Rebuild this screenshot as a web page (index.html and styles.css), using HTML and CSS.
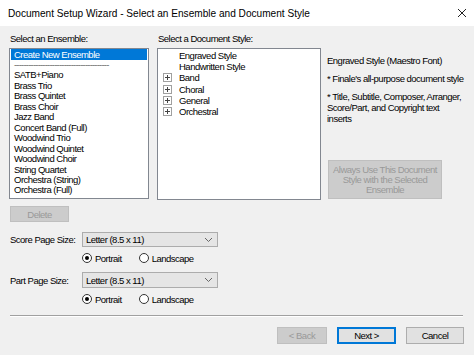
FILE: index.html
```html
<!DOCTYPE html>
<html lang="en">
<head>
  <meta charset="UTF-8" />
  <title>Document Setup Wizard</title>
  <link rel="stylesheet" href="styles.css">
</head>
<body>
<div class="window">
  <div class="titlebar">
    <span class="title">Document Setup Wizard - Select an Ensemble and Document Style</span>
    <svg class="close" width="10" height="10" viewBox="0 0 10 10"><path d="M1 1 L9 9 M9 1 L1 9" stroke="#222" stroke-width="1" fill="none"/></svg>
  </div>

  <div class="main">
    <div class="top">
      <div class="col ens">
        <div class="label">Select an Ensemble:</div>
        <ul class="list ens-list">
          <li class="sel">Create New Ensemble</li>
          <li class="dash">----------------------------------------</li>
          <li>SATB+Piano</li>
          <li>Brass Trio</li>
          <li>Brass Quintet</li>
          <li>Brass Choir</li>
          <li>Jazz Band</li>
          <li>Concert Band (Full)</li>
          <li>Woodwind Trio</li>
          <li>Woodwind Quintet</li>
          <li>Woodwind Choir</li>
          <li>String Quartet</li>
          <li>Orchestra (String)</li>
          <li>Orchestra (Full)</li>
        </ul>
        <button class="btn off delete">Delete</button>
      </div>

      <div class="col sty">
        <div class="label">Select a Document Style:</div>
        <ul class="list sty-list">
          <li><span class="nobox"></span>Engraved Style</li>
          <li><span class="nobox"></span>Handwritten Style</li>
          <li><svg class="plus" width="9" height="9" viewBox="0 0 9 9"><rect x="0.5" y="0.5" width="8" height="8" fill="#fff" stroke="#a0a0a0"/><path d="M2 4.5 H7 M4.5 2 V7" stroke="#444"/></svg>Band</li>
          <li><svg class="plus" width="9" height="9" viewBox="0 0 9 9"><rect x="0.5" y="0.5" width="8" height="8" fill="#fff" stroke="#a0a0a0"/><path d="M2 4.5 H7 M4.5 2 V7" stroke="#444"/></svg>Choral</li>
          <li><svg class="plus" width="9" height="9" viewBox="0 0 9 9"><rect x="0.5" y="0.5" width="8" height="8" fill="#fff" stroke="#a0a0a0"/><path d="M2 4.5 H7 M4.5 2 V7" stroke="#444"/></svg>General</li>
          <li><svg class="plus" width="9" height="9" viewBox="0 0 9 9"><rect x="0.5" y="0.5" width="8" height="8" fill="#fff" stroke="#a0a0a0"/><path d="M2 4.5 H7 M4.5 2 V7" stroke="#444"/></svg>Orchestral</li>
        </ul>
      </div>

      <div class="col desc">
        <p>Engraved Style (Maestro Font)</p>
        <p>* Finale's all-purpose document style</p>
        <p>* Title, Subtitle, Composer, Arranger,<br>Score/Part, and Copyright text<br>inserts</p>
        <button class="btn off always">Always Use This Document<br>Style with the Selected<br>Ensemble</button>
      </div>
    </div>

    <div class="size">
      <span class="size-label">Score Page Size:</span>
      <div class="combo">Letter (8.5 x 11)<svg class="chev" width="9" height="6" viewBox="0 0 9 6"><path d="M1 1 L4.5 4.5 L8 1" stroke="#666" fill="none"/></svg></div>
    </div>
    <div class="radios">
      <span class="radio on"></span><span class="rtext">Portrait</span>
      <span class="radio"></span><span class="rtext">Landscape</span>
    </div>

    <div class="size part">
      <span class="size-label">Part Page Size:</span>
      <div class="combo">Letter (8.5 x 11)<svg class="chev" width="9" height="6" viewBox="0 0 9 6"><path d="M1 1 L4.5 4.5 L8 1" stroke="#666" fill="none"/></svg></div>
    </div>
    <div class="radios">
      <span class="radio on"></span><span class="rtext">Portrait</span>
      <span class="radio"></span><span class="rtext">Landscape</span>
    </div>

    <div class="sep"></div>

    <div class="actions">
      <button class="btn off back">&lt; Back</button>
      <button class="btn next">Next &gt;</button>
      <button class="btn cancel">Cancel</button>
    </div>
  </div>
</div>
</body>
</html>
```

FILE: styles.css
```css
body { margin: 0; background: #f0f0f0; font-family: "Liberation Sans", Arial, sans-serif; font-size: 9.5px; letter-spacing: -0.5px; color: #000; }
.window { width: 474px; height: 355px; background: #f0f0f0; overflow: hidden; }
.titlebar { height: 26px; background: #fff; display: flex; align-items: center; justify-content: space-between; padding: 0 7px 0 8px; }
.title { font-size: 10.1px; letter-spacing: 0; }
.close { display: block; }
.main { padding: 7px 0 0 9px; }
.top { display: flex; }
.label { height: 12px; line-height: 12px; padding-left: 1px; margin-bottom: 3px; }
ul.list { list-style: none; margin: 0; background: #fff; border: 1px solid #828790; height: 149px; box-sizing: content-box; }
.ens-list { width: 138px; padding: 0; }
.ens-list li { line-height: 10.46px; height: 10.46px; padding-left: 3px; margin: 0 1px; white-space: nowrap; overflow: hidden; }
.ens-list li.sel { background: #0078d7; color: #fff; height: 11px; line-height: 11px; }
.ens-list li.dash { letter-spacing: -0.8px; color: #666; }
.sty { margin-left: 8px; }
.sty-list { width: 162px; padding: 1px 0 0; height: 148px; }
.sty-list li { display: flex; align-items: center; height: 11.2px; line-height: 11.2px; padding-left: 5px; }
.plus, .nobox { width: 9px; height: 9px; margin-right: 7px; flex: none; }
.desc { margin-left: 6px; padding-top: 22px; width: 146px; display: flex; flex-direction: column; }
.desc p { margin: 0 0 7px; line-height: 11px; white-space: nowrap; }
.btn { font-family: inherit; font-size: inherit; letter-spacing: inherit; background: #e1e1e1; border: 1px solid #adadad; color: #000; padding: 0; box-sizing: border-box; }
.btn.off { background: #cccccc; border-color: #bfbfbf; color: #999; }
.delete { display: block; width: 59px; height: 16px; margin: 7px 0 0 1px; }
.always { width: 114px; height: 39px; margin-top: 29px; margin-left: 1px; line-height: 10px; padding: 0 2px; }
.size { display: flex; align-items: center; margin-top: 10px; }
.size.part { margin-top: 9px; }
.size-label { width: 72px; padding-left: 1px; }
.combo { width: 136px; height: 15px; box-sizing: border-box; background: #e5e5e5; border: 1px solid #acacac; display: flex; align-items: center; justify-content: space-between; padding: 0 4px 0 3px; }
.part .combo { height: 16px; }
.chev { display: block; }
.radios { display: flex; align-items: center; height: 10px; margin: 6px 0 0 73px; }
.radio { width: 10px; height: 10px; box-sizing: border-box; border: 1px solid #333; border-radius: 50%; background: #fff; display: flex; align-items: center; justify-content: center; }
.radio.on::after { content: ""; width: 4px; height: 4px; border-radius: 50%; background: #000; }
.rtext { margin: 0 17px 0 3px; }
.sep { height: 1px; background: #a0a0a0; border-bottom: 1px solid #fff; width: 453px; margin: 11px 0 0 1px; }
.actions { display: flex; justify-content: flex-end; gap: 10px; width: 455px; margin-top: 10px; }
.actions .btn { height: 17px; }
.back { width: 50px; }
.next { width: 59px; border: 2px solid #0078d7; }
.cancel { width: 58px; }
```
